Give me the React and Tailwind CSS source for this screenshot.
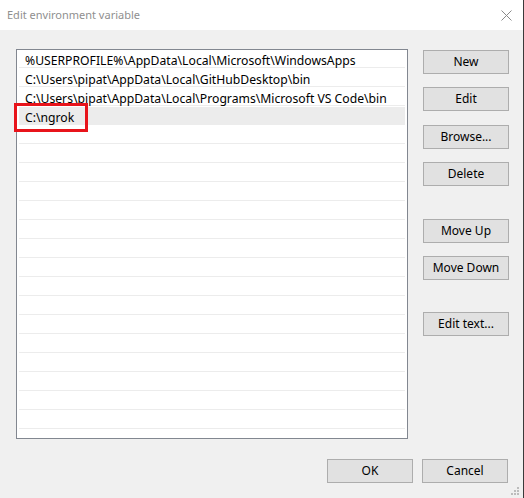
import React from 'react';

const paths = [
  '%USERPROFILE%\\AppData\\Local\\Microsoft\\WindowsApps',
  'C:\\Users\\pipat\\AppData\\Local\\GitHubDesktop\\bin',
  'C:\\Users\\pipat\\AppData\\Local\\Programs\\Microsoft VS Code\\bin',
  'C:\\ngrok',
];

// filas vacías hasta llenar la lista
const rows = [...paths, ...Array(17).fill('')];

function Btn({ children, className = '' }) {
  return (
    <button className={`w-[86px] h-[24px] bg-[#e1e1e1] border border-[#adadad] text-[12px] text-black flex items-center justify-center ${className}`}>
      {children}
    </button>
  );
}

export default function App() {
  return (
    <div
      className="relative w-[524px] h-[498px] bg-[#f0f0f0] border-r border-[#3a3a3a] flex flex-col overflow-hidden"
      style={{ fontFamily: '"Segoe UI", "Noto Sans", "Open Sans", sans-serif' }}
    >
      {/* barra de título */}
      <div className="h-[30px] bg-white flex items-center justify-between pl-[7px] pr-[10px] shrink-0">
        <span className="text-[11px] text-[#8f8f8f]">Edit environment variable</span>
        <svg width="11" height="11" viewBox="0 0 11 11" className="mr-[1px]">
          <path d="M0.5 0.5 L10.5 10.5 M10.5 0.5 L0.5 10.5" stroke="#8a8a8a" strokeWidth="1" />
        </svg>
      </div>

      {/* cuerpo */}
      <div className="flex pl-[16px] pt-[19px]">
        <div className="relative w-[392px] h-[390px] border border-[#828790] bg-white overflow-hidden">
          {rows.map((p, i) => (
            <div key={i} className="h-[19px] px-[2px] pb-[1px]">
              <div className={`h-[18px] border-b border-[#ececec] text-[12.2px] leading-[19px] pt-[1px] text-black pl-[6px] whitespace-nowrap ${i === 3 ? 'bg-[#ececec]' : ''}`}>
                {p}
              </div>
            </div>
          ))}
        </div>

        <div className="flex flex-col ml-[15px] mt-[1px]">
          <Btn>New</Btn>
          <Btn className="mt-[13px]">Edit</Btn>
          <Btn className="mt-[14px]">Browse...</Btn>
          <Btn className="mt-[13px]">Delete</Btn>
          <Btn className="mt-[33px]">Move Up</Btn>
          <Btn className="mt-[13px]">Move Down</Btn>
          <Btn className="mt-[32px]">Edit text...</Btn>
        </div>
      </div>

      {/* botones inferiores */}
      <div className="flex justify-end gap-[9px] pr-[15px] mt-[20px]">
        <Btn>OK</Btn>
        <Btn>Cancel</Btn>
      </div>

      {/* recuadro rojo */}
      <div className="absolute left-[14px] top-[103px] w-[74px] h-[29px] border-[3px] border-[#e8141b]" />

      {/* agarre de redimensión */}
      <svg className="absolute right-[3px] bottom-[2px]" width="10" height="10" viewBox="0 0 10 10">
        <rect x="7" y="1" width="2" height="2" fill="#bcbcbc" />
        <rect x="4" y="4" width="2" height="2" fill="#bcbcbc" />
        <rect x="7" y="4" width="2" height="2" fill="#bcbcbc" />
        <rect x="1" y="7" width="2" height="2" fill="#bcbcbc" />
        <rect x="4" y="7" width="2" height="2" fill="#bcbcbc" />
        <rect x="7" y="7" width="2" height="2" fill="#bcbcbc" />
      </svg>
    </div>
  );
}
